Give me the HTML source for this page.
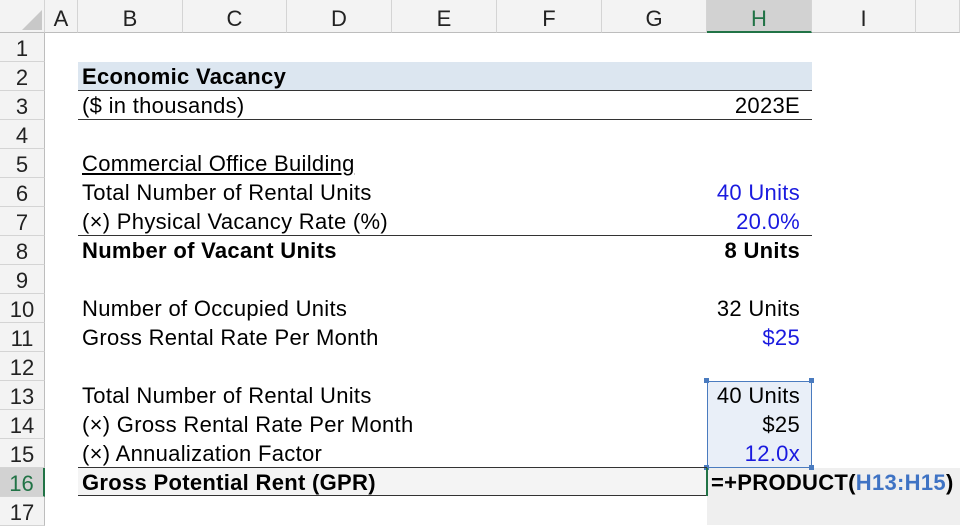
<!DOCTYPE html>
<html><head><meta charset="utf-8"><style>
body{margin:0;width:960px;height:527px;overflow:hidden;background:#fff;font-family:"Liberation Sans",Arial,sans-serif;position:relative}
div{position:absolute;box-sizing:border-box}
.hd{top:0;height:33px;background:#f3f3f3;border-right:1px solid #d4d4d4;border-bottom:1px solid #bdbdbd;font-size:22px;text-align:center;line-height:38px;color:#222}
.rn{left:0;width:45px;height:29px;background:#f3f3f3;border-bottom:1px solid #d4d4d4;border-right:1px solid #bdbdbd;font-size:22px;text-align:center;line-height:31px;color:#222}
.t{left:82px;font-size:22px;letter-spacing:0.3px;line-height:30px;height:29px;color:#000;white-space:nowrap}
.v{right:160px;font-size:22px;letter-spacing:0.3px;line-height:30px;height:29px;color:#000;text-align:right;white-space:nowrap}
.b{font-weight:bold}.bl{color:#1a1adf}
.ln{left:78px;width:734px;height:0;border-top:1.5px solid #333}
</style></head><body>
<div class="hd" style="left:0;width:45px;background:#f3f3f3"><svg width="45" height="33" style="position:absolute;left:0;top:0"><polygon points="42,10 42,30 22,30" fill="#c8c8c8"/></svg></div>
<div class="hd" style="left:45px;width:33px">A</div>
<div class="hd" style="left:78px;width:105px">B</div>
<div class="hd" style="left:183px;width:104px">C</div>
<div class="hd" style="left:287px;width:105px">D</div>
<div class="hd" style="left:392px;width:105px">E</div>
<div class="hd" style="left:497px;width:105px">F</div>
<div class="hd" style="left:602px;width:105px">G</div>
<div class="hd" style="left:707px;width:105px;background:#d2d2d2;color:#217346;border-bottom:2px solid #217346">H</div>
<div class="hd" style="left:812px;width:104px">I</div>
<div class="hd" style="left:916px;width:44px"></div>

<div class="rn" style="top:33px">1</div>
<div class="rn" style="top:62px">2</div>
<div class="rn" style="top:91px">3</div>
<div class="rn" style="top:120px">4</div>
<div class="rn" style="top:149px">5</div>
<div class="rn" style="top:178px">6</div>
<div class="rn" style="top:207px">7</div>
<div class="rn" style="top:236px">8</div>
<div class="rn" style="top:265px">9</div>
<div class="rn" style="top:294px">10</div>
<div class="rn" style="top:323px">11</div>
<div class="rn" style="top:352px">12</div>
<div class="rn" style="top:381px">13</div>
<div class="rn" style="top:410px">14</div>
<div class="rn" style="top:439px">15</div>
<div class="rn" style="top:468px;background:#d2d2d2;color:#217346;border-right:2px solid #217346">16</div>
<div class="rn" style="top:497px">17</div>

<div style="left:78px;top:62px;width:734px;height:29px;background:#dce6f0"></div>
<div style="left:78px;top:468px;width:629px;height:28px;background:#f4f4f4"></div>
<div style="left:707px;top:468px;width:253px;height:57px;background:#efefef"></div>
<div style="left:707px;top:381px;width:105px;height:87px;background:#e9eff8;border:1.5px solid #4a7bbf"></div>
<div style="left:704px;top:378px;width:5px;height:5px;background:#4a7bbf"></div>
<div style="left:809px;top:378px;width:5px;height:5px;background:#4a7bbf"></div>
<div style="left:704px;top:465px;width:5px;height:5px;background:#4a7bbf"></div>
<div style="left:809px;top:465px;width:5px;height:5px;background:#4a7bbf"></div>

<div class="ln" style="top:90px"></div>
<div class="ln" style="top:119px"></div>
<div class="ln" style="top:235px"></div>
<div class="ln" style="top:467px;width:629px"></div>
<div class="ln" style="top:495px;width:629px"></div>
<div style="left:706px;top:468px;height:28px;width:2px;background:#217346"></div>

<div class="t b" style="top:62px">Economic Vacancy</div>
<div class="t" style="top:91px">($ in thousands)</div>
<div class="v" style="top:91px">2023E</div>
<div class="t" style="top:149px;text-decoration:underline">Commercial Office Building</div>
<div class="t" style="top:178px">Total Number of Rental Units</div>
<div class="v bl" style="top:178px">40 Units</div>
<div class="t" style="top:207px">(×) Physical Vacancy Rate (%)</div>
<div class="v bl" style="top:207px">20.0%</div>
<div class="t b" style="top:236px">Number of Vacant Units</div>
<div class="v b" style="top:236px">8 Units</div>
<div class="t" style="top:294px">Number of Occupied Units</div>
<div class="v" style="top:294px">32 Units</div>
<div class="t" style="top:323px">Gross Rental Rate Per Month</div>
<div class="v bl" style="top:323px">$25</div>
<div class="t" style="top:381px">Total Number of Rental Units</div>
<div class="v" style="top:381px">40 Units</div>
<div class="t" style="top:410px">(×) Gross Rental Rate Per Month</div>
<div class="v" style="top:410px">$25</div>
<div class="t" style="top:439px">(×) Annualization Factor</div>
<div class="v bl" style="top:439px">12.0x</div>
<div class="t b" style="top:468px">Gross Potential Rent (GPR)</div>
<div class="t b" style="top:468px;left:711px">=+PRODUCT(<span style="color:#3f73c4">H13:H15</span>)</div>
</body></html>
